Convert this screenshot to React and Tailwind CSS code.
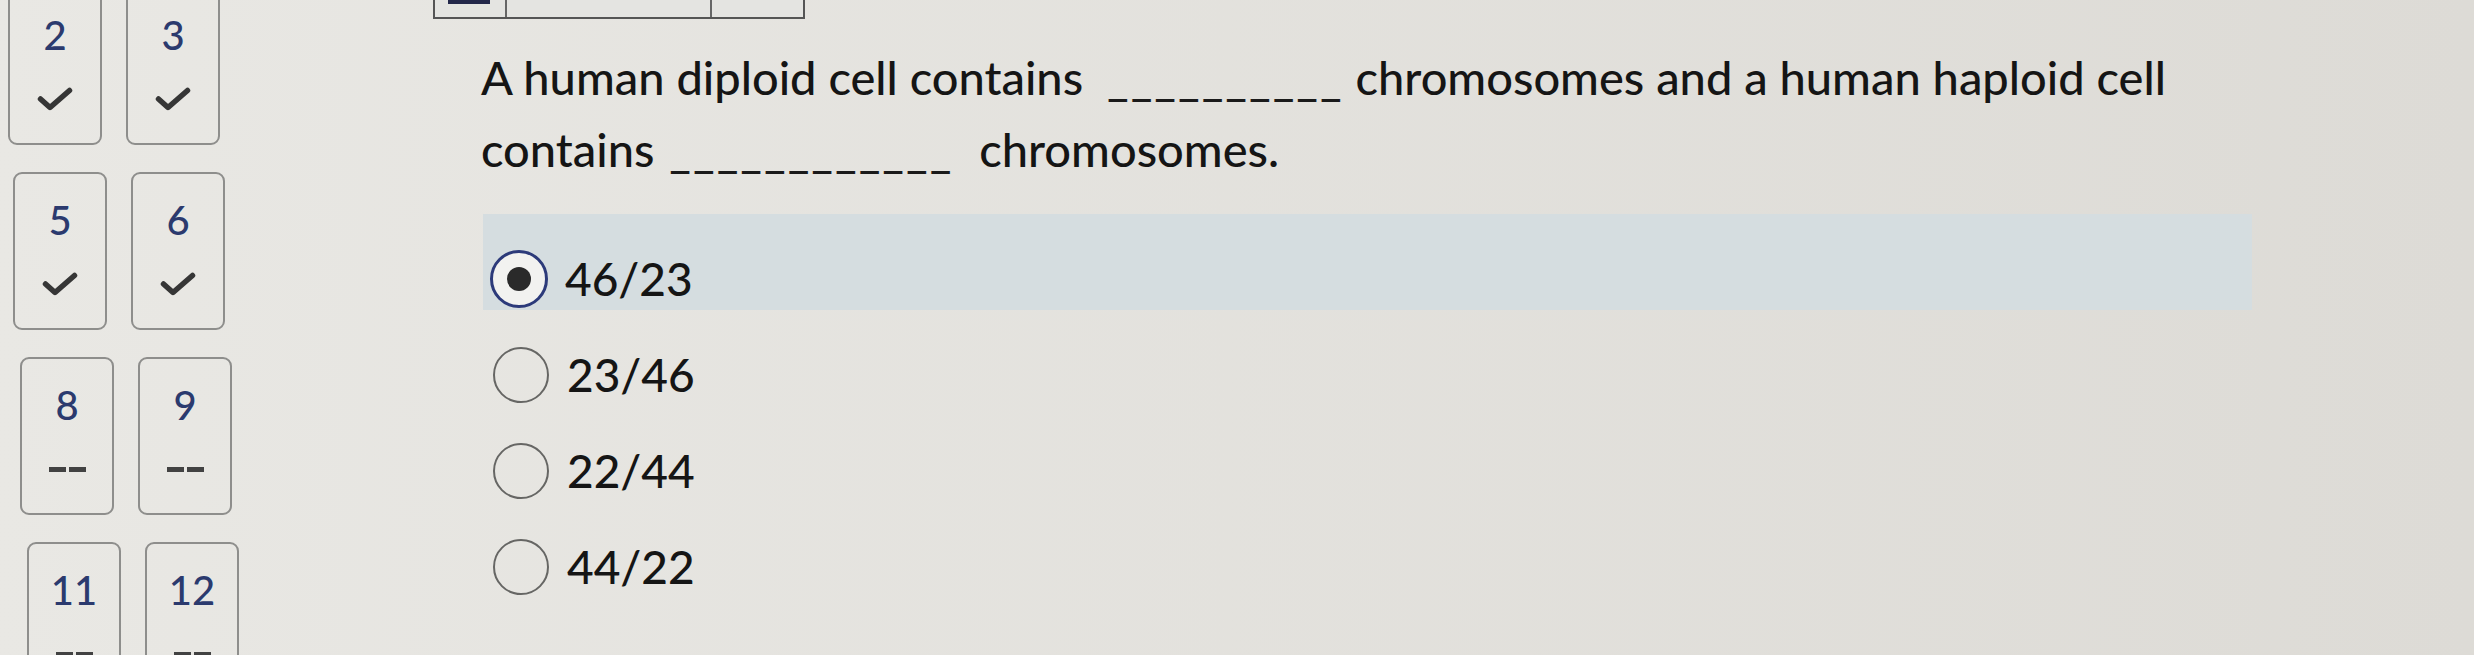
import React from 'react';

const tiles = [
  [{ n: '2', s: 'done' }, { n: '3', s: 'done' }],
  [{ n: '5', s: 'done' }, { n: '6', s: 'done' }],
  [{ n: '8', s: 'open' }, { n: '9', s: 'open' }],
  [{ n: '11', s: 'open' }, { n: '12', s: 'open' }],
];

// photo is a bit skewed, rows drift right as they go down
const rowPad = ['pl-[8px]', 'pl-[13px]', 'pl-[20px]', 'pl-[27px]'];

const options = ['46/23', '23/46', '22/44', '44/22'];

const Check = () => (
  <svg width="36" height="26" viewBox="0 0 36 26" fill="none">
    <path d="M3.5 13 L13 21.5 L32.5 4.5" stroke="#363636" strokeWidth="5.5" strokeLinecap="round" strokeLinejoin="round" />
  </svg>
);

const Dashes = () => (
  <div className="flex gap-[3px]">
    <span className="block w-[17px] h-[5px] bg-[#424242]" />
    <span className="block w-[17px] h-[5px] bg-[#424242]" />
  </div>
);

const Tile = ({ n, s }) => (
  <div className="w-[94px] h-[158px] shrink-0 rounded-[9px] border-2 border-[#8e8e8c] flex flex-col items-center">
    <div className="h-[100px] pt-[22px] flex justify-center">
      <span className="text-[40px] leading-[48px] font-medium text-[#2b3a6e]">{n}</span>
    </div>
    <div className="h-[20px] flex items-center justify-center">
      {s === 'done' ? <Check /> : <Dashes />}
    </div>
  </div>
);

const Radio = ({ checked }) =>
  checked ? (
    <span className="w-[58px] h-[58px] shrink-0 rounded-full border-[3px] border-[#2c3a7a] bg-[#f2f2f0] flex items-center justify-center">
      <span className="w-[24px] h-[24px] rounded-full bg-[#2a2a2a]" />
    </span>
  ) : (
    <span className="w-[56px] h-[56px] shrink-0 rounded-full border-2 border-[#666664]" />
  );

const Blank = ({ count, cls }) => (
  <span className={`tracking-[2px] text-[#1a1a1a] ${cls}`}>{'_'.repeat(count)}</span>
);

export default function App() {
  return (
    <div className="w-[2474px] h-[655px] overflow-hidden flex bg-linear-to-r from-[#e9e8e4] to-[#dddbd6] font-['Lato','Noto_Sans',sans-serif]">
      {/* question navigator */}
      <div className="w-[433px] shrink-0 flex flex-col gap-[27px] -mt-[13px]">
        {tiles.map((row, i) => (
          <div key={i} className={`flex gap-[24px] ${rowPad[i]}`}>
            {row.map((t) => (
              <Tile key={t.n} {...t} />
            ))}
          </div>
        ))}
      </div>

      {/* question body */}
      <div className="flex-1 flex flex-col">
        <div className="w-[372px] h-[19px] flex border-2 border-t-0 border-[#555] bg-[#e4e4e1]">
          <div className="w-[72px] border-r-2 border-[#666] pl-[13px]">
            <div className="w-[42px] h-[4px] bg-[#23284a]" />
          </div>
          <div className="w-[205px] border-r-2 border-[#666]" />
          <div className="flex-1" />
        </div>

        <p className="mt-[22px] ml-[48px] w-[1770px] text-[47px] leading-[72px] font-medium text-[#151515]">
          A human diploid cell contains <Blank count={10} cls="ml-[12px]" /> chromosomes and a human haploid cell contains <Blank count={12} cls="ml-[3px] mr-[14px]" /> chromosomes.
        </p>

        <div className="mt-[29px] ml-[50px] w-[1769px] flex flex-col">
          {options.map((o, i) => (
            <div
              key={o}
              className={`h-[96px] pt-[34px] flex items-center ${i === 0 ? 'bg-[#d5dde0] pl-[7px]' : 'pl-[10px]'}`}
            >
              <Radio checked={i === 0} />
              <span className={`${i === 0 ? 'ml-[17px]' : 'ml-[18px]'} text-[46px] leading-none font-medium text-[#151515]`}>{o}</span>
            </div>
          ))}
        </div>
      </div>
    </div>
  );
}
